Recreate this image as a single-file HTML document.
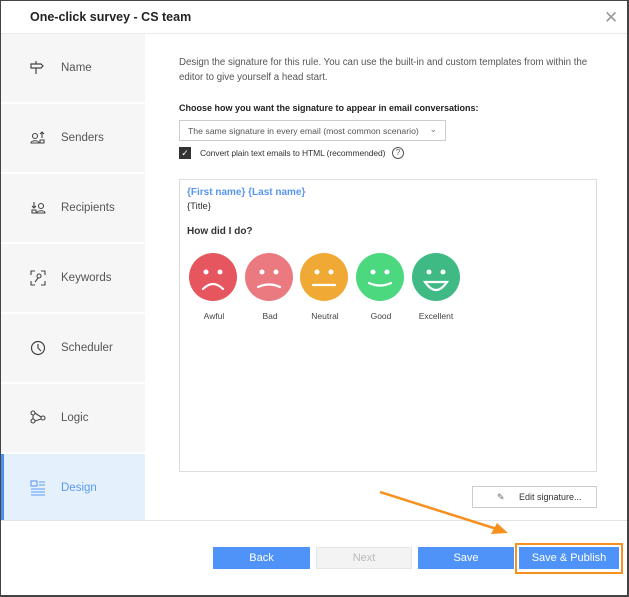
<!DOCTYPE html>
<html><head><meta charset="utf-8"><style>
*{box-sizing:border-box;margin:0;padding:0}
body{width:629px;height:597px;position:relative;background:#fff;font-family:"Liberation Sans",sans-serif;overflow:hidden;color:#333}
.a{position:absolute}
.frame{left:0;top:0;width:629px;height:597px;border:1px solid #444;border-right-width:2px;border-bottom-width:2px}
.title{left:30px;top:10px;font-size:12.5px;font-weight:bold;color:#222}
.close{left:604px;top:8px;font-size:17px;color:#999}
.hline{left:1px;top:33px;width:626px;height:1px;background:#eaeaea}
.side{left:1px;top:34px;width:144px;height:487px;background:#fff}
.item{left:1px;width:144px;height:68px;background:#f6f6f6;font-size:11.5px;color:#555}
.item span{position:absolute;left:60px;top:28px}
.item svg{position:absolute;left:29px;top:26px}
.act{background:#e5f0fd;color:#5b9bf3;border-left:3px solid #4d8ef0}
.t{font-size:9.7px;color:#555}
.btn{height:22px;font-size:11px;text-align:center;line-height:22px;color:#fff;background:#4f93f8}
.lab{font-size:8.5px;color:#444;width:60px;text-align:center}
</style></head><body>
<div class="a title">One-click survey - CS team</div>
<div class="a close">✕</div>
<div class="a hline"></div>
<div class="a side"></div>

<div class="a item" style="top:34px"><svg width="14" height="16" viewBox="0 0 14 16" fill="none" stroke="#444" stroke-width="1.2"><path d="M1 4h10l2 2-2 2H1z M6 1v3 M6 8v6"/></svg><span>Name</span></div>
<div class="a item" style="top:104px"><svg width="16" height="16" viewBox="0 0 16 16" fill="none" stroke="#444" stroke-width="1.1"><circle cx="5" cy="6" r="2.5"/><path d="M1 13c0-3 8-3 8 0z M12 2v6 M10 4l2-2 2 2 M10 13h4v-3h-4z"/></svg><span>Senders</span></div>
<div class="a item" style="top:174px"><svg width="16" height="16" viewBox="0 0 16 16" fill="none" stroke="#444" stroke-width="1.1"><circle cx="11" cy="6" r="2.5"/><path d="M7 13c0-3 8-3 8 0z M4 2v6 M2 6l2 2 2-2 M2 13h4v-3H2z"/></svg><span>Recipients</span></div>
<div class="a item" style="top:244px"><svg width="16" height="16" viewBox="0 0 16 16" fill="none" stroke="#444" stroke-width="1.1"><path d="M1 5V1h4 M11 1h4v4 M15 11v4h-4 M5 15H1v-4"/><circle cx="9" cy="6" r="2"/><path d="M8 8l-3 4"/></svg><span>Keywords</span></div>
<div class="a item" style="top:314px"><svg width="16" height="16" viewBox="0 0 16 16" fill="none" stroke="#444" stroke-width="1.2"><circle cx="8" cy="8" r="6.5"/><path d="M8 4v4l3 3"/></svg><span>Scheduler</span></div>
<div class="a item" style="top:384px"><svg width="16" height="16" viewBox="0 0 16 16" fill="none" stroke="#444" stroke-width="1.1"><circle cx="3" cy="3" r="2"/><circle cx="3" cy="11" r="2"/><circle cx="13" cy="8" r="2"/><path d="M5 3l6 4 M5 11l6-2 M3 5v4"/></svg><span>Logic</span></div>
<div class="a item act" style="top:454px;height:67px"><svg width="16" height="16" viewBox="0 0 16 16" fill="none" stroke="#5b9bf3" stroke-width="1.1" style="left:26px"><rect x="1" y="1" width="6" height="5"/><path d="M9 2h6 M9 5h6 M1 9h14 M1 12h14 M1 15h14"/></svg><span style="left:57px">Design</span></div>

<div class="a t" style="left:179px;top:55px;width:428px;line-height:15px">Design the signature for this rule. You can use the built-in and custom templates from within the editor to give yourself a head start.</div>
<div class="a" style="left:179px;top:103px;font-size:9px;font-weight:bold;color:#222">Choose how you want the signature to appear in email conversations:</div>
<div class="a" style="left:179px;top:120px;width:267px;height:21px;border:1px solid #ccc;font-size:8.7px;color:#555;padding:5px 8px">The same signature in every email (most common scenario)<span style="position:absolute;right:8px;top:3px;font-size:9px;color:#777">⌄</span></div>
<div class="a" style="left:179px;top:147px;width:12px;height:12px;background:#333;color:#fff;font-size:9px;text-align:center;line-height:12px">✓</div>
<div class="a" style="left:200px;top:148px;font-size:8.5px;color:#333;letter-spacing:-0.1px">Convert plain text emails to HTML (recommended)</div>
<div class="a" style="left:392px;top:147px;width:12px;height:12px;border:1px solid #555;border-radius:50%;font-size:8px;text-align:center;line-height:10px;color:#555">?</div>

<div class="a" style="left:179px;top:179px;width:418px;height:293px;border:1px solid #ddd"></div>
<div class="a" style="left:187px;top:187px;font-size:10px;font-weight:bold;color:#5a96f0">{First name} {Last name}</div>
<div class="a" style="left:187px;top:201px;font-size:9.5px;color:#333">{Title}</div>
<div class="a" style="left:187px;top:226px;font-size:10px;font-weight:bold;color:#333">How did I do?</div>

<svg class="a" style="left:189px;top:252px" width="276" height="50" viewBox="0 0 276 50">
<g fill="#fff" stroke="#fff" stroke-width="2.2" stroke-linecap="round">
<circle cx="24" cy="25" r="24" fill="#e5565f" stroke="none"/><circle cx="17" cy="20" r="2.5" stroke="none"/><circle cx="31" cy="20" r="2.5" stroke="none"/><path d="M14 37q10-10 20 0" fill="none"/>
<circle cx="80" cy="25" r="24" fill="#ea7a80" stroke="none"/><circle cx="73" cy="20" r="2.5" stroke="none"/><circle cx="87" cy="20" r="2.5" stroke="none"/><path d="M69 35q11-5 22 0" fill="none"/>
<circle cx="135" cy="25" r="24" fill="#f0a935" stroke="none"/><circle cx="128" cy="20" r="2.5" stroke="none"/><circle cx="142" cy="20" r="2.5" stroke="none"/><path d="M124 33h22" fill="none"/>
<circle cx="191" cy="25" r="24" fill="#4cd87f" stroke="none"/><circle cx="184" cy="20" r="2.5" stroke="none"/><circle cx="198" cy="20" r="2.5" stroke="none"/><path d="M180 31q11 5 22 0" fill="none"/>
<circle cx="247" cy="25" r="24" fill="#3fba84" stroke="none"/><circle cx="240" cy="20" r="2.5" stroke="none"/><circle cx="254" cy="20" r="2.5" stroke="none"/><path d="M236 30h22q-11 16-22 0z" fill="none"/>
</g></svg>
<div class="a lab" style="left:184px;top:311px">Awful</div>
<div class="a lab" style="left:240px;top:311px">Bad</div>
<div class="a lab" style="left:295px;top:311px">Neutral</div>
<div class="a lab" style="left:351px;top:311px">Good</div>
<div class="a lab" style="left:406px;top:311px">Excellent</div>

<div class="a" style="left:472px;top:486px;width:125px;height:22px;border:1px solid #ccc;font-size:9px;color:#333;line-height:20px;padding-left:46px">Edit signature...<span style="position:absolute;left:24px;top:0;color:#666">✎</span></div>
<div class="a" style="left:1px;top:520px;width:626px;height:1px;background:#e3e3e3"></div>

<div class="a btn" style="left:213px;top:547px;width:97px">Back</div>
<div class="a btn" style="left:316px;top:547px;width:96px;background:#f3f3f3;color:#bbb;border:1px solid #e5e5e5;line-height:20px">Next</div>
<div class="a btn" style="left:418px;top:547px;width:96px">Save</div>
<div class="a" style="left:515px;top:543px;width:108px;height:31px;border:2px solid #f7901e"></div>
<div class="a btn" style="left:519px;top:547px;width:100px">Save &amp; Publish</div>

<svg class="a" style="left:375px;top:488px" width="140" height="50"><path d="M5 4L125 42" stroke="#f7901e" stroke-width="2.5"/><path d="M133 45L116 46L122 35z" fill="#f7901e"/></svg>
<div class="a frame"></div>
</body></html>
